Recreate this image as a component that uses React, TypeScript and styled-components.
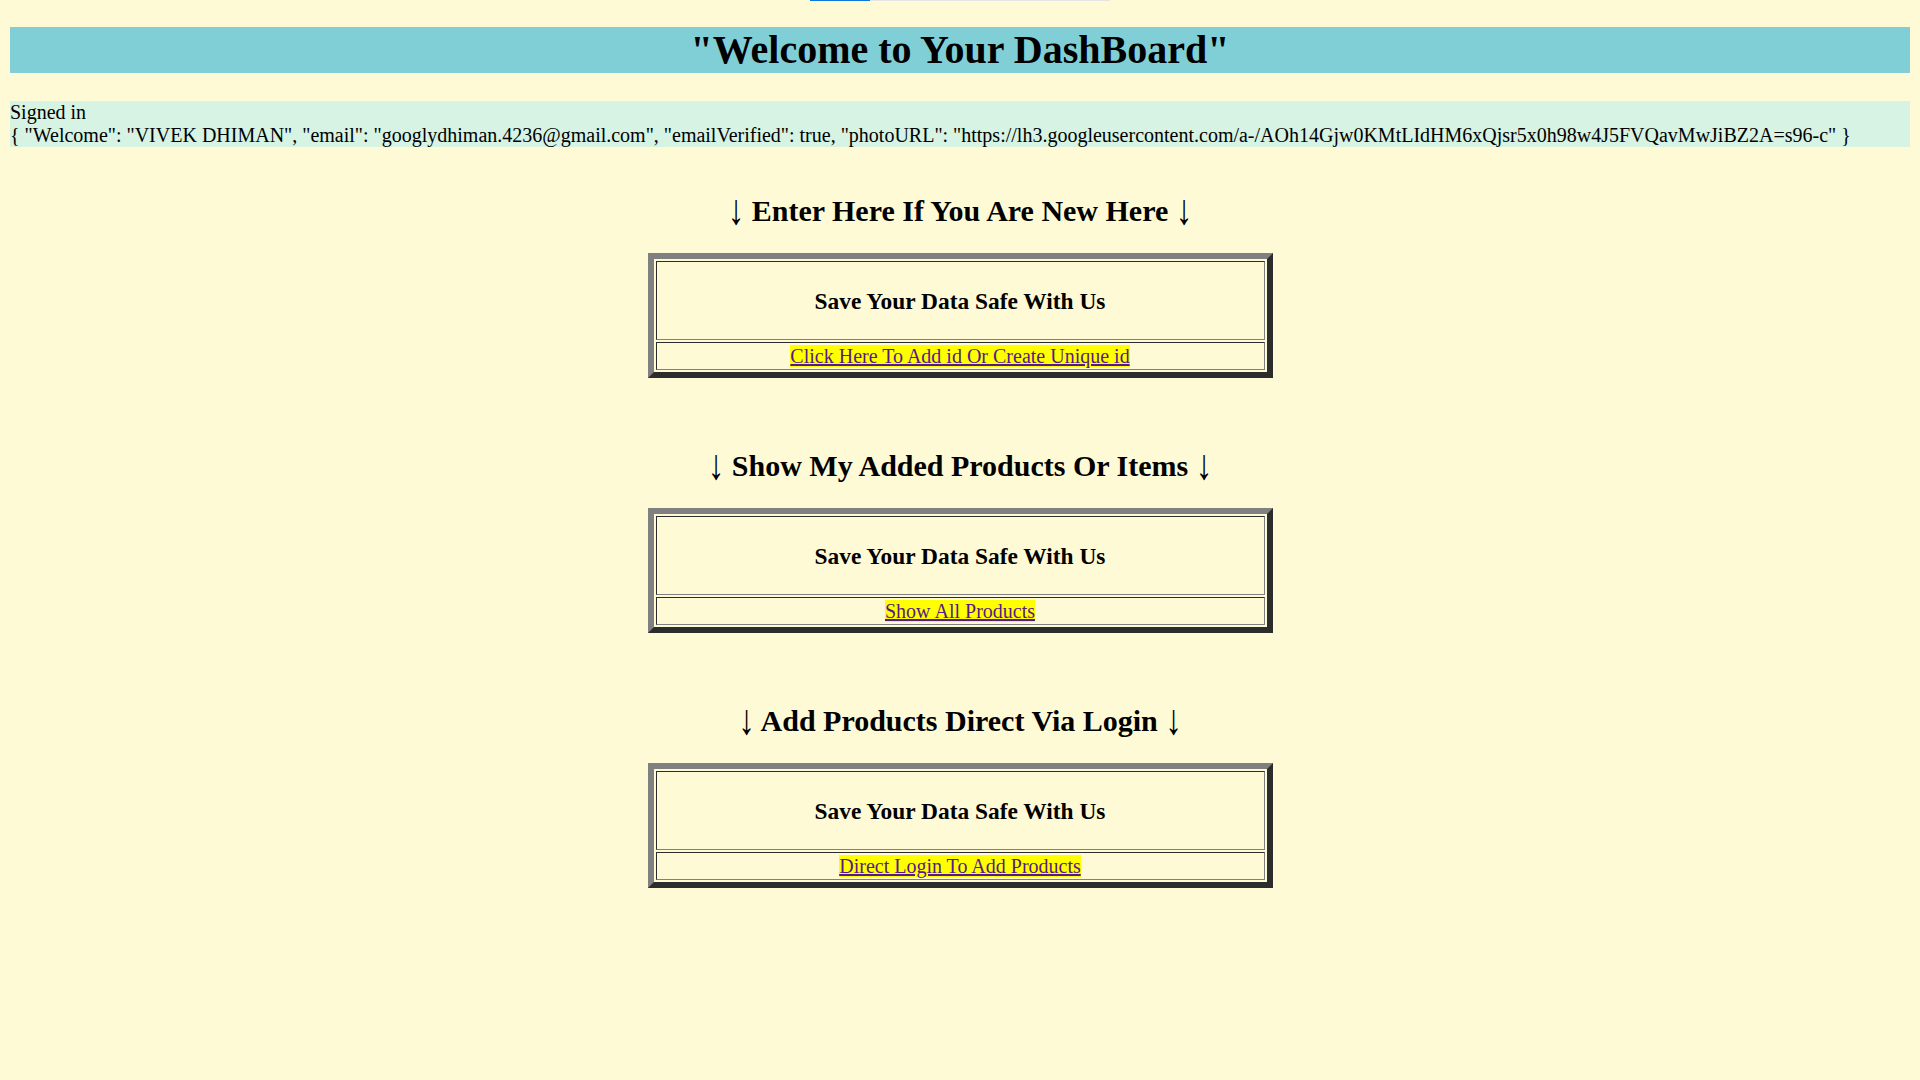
import styled, { createGlobalStyle } from "styled-components";

const GlobalStyle = createGlobalStyle`
    html, body {
        margin: 0;
        padding: 0;
        background: #fffad6;
    }
    body {
        font-family: "Liberation Serif", "Times New Roman", serif;
        font-size: 20px;
        color: #000;
    }
`;

const Page = styled.div`
    position: relative;
    min-height: 1080px;
    padding: 0 10px;
    box-sizing: border-box;
`;

// the progress bar peeking in at the very top of the page
const TopProgress = styled.div`
    position: absolute;
    top: 0;
    left: 50%;
    transform: translateX(-50%);
    width: 300px;
    height: 1px;
    background: #e5e5e5;
`;

const TopProgressFill = styled.div<{ $value: number }>`
    width: ${(p) => p.$value}%;
    height: 100%;
    background: #0a78d6;
`;

const Title = styled.h1`
    margin: 0;
    padding-top: 27px;
    font-size: 40px;
    line-height: 46px;
    font-weight: bold;
    text-align: center;
    & > span {
        display: block;
        background: #80cfd7;
    }
`;

const Info = styled.div`
    margin-top: 28px;
    background: #d6f3e3;
    font-size: 20px;
    line-height: 23px;
    white-space: nowrap;
`;

const Sections = styled.div`
    display: flex;
    flex-direction: column;
    align-items: center;
    gap: 71px;
    padding-top: 47px;
`;

const Section = styled.section`
    display: flex;
    flex-direction: column;
    align-items: center;
`;

const Heading = styled.h2`
    margin: 0 0 25px;
    font-size: 30px;
    line-height: 34px;
    font-weight: bold;
    text-align: center;
`;

const Arrow = styled.span`
    display: inline-block;
    font-weight: normal;
    font-size: 1.1em;
    line-height: 31px;
    transform: scaleY(1.3);
    transform-origin: 50% 50%;
`;

const Card = styled.table`
    width: 625px;
    border-collapse: separate;
    border-spacing: 2px;
    border-style: solid;
    border-width: 6px;
    border-color: #808080 #2c2c2c #2c2c2c #808080;
`;

const Cell = styled.td`
    padding: 1px;
    text-align: center;
    border-style: solid;
    border-width: 1px;
    border-color: #2c2c2c #808080 #808080 #2c2c2c;
`;

const CardTitle = styled.h3`
    margin: 25px 0 23px;
    font-size: 23.4px;
    line-height: 27px;
    font-weight: bold;
`;

const CardLink = styled.a`
    display: inline-block;
    font-size: 20px;
    line-height: 24px;
    color: #551a8b;
    text-decoration: underline;
    & > span {
        background: #ffff00;
    }
`;

const user = {
    Welcome: "VIVEK DHIMAN",
    email: "googlydhiman.4236@gmail.com",
    emailVerified: true,
    photoURL: "https://lh3.googleusercontent.com/a-/AOh14Gjw0KMtLIdHM6xQjsr5x0h98w4J5FVQavMwJiBZ2A=s96-c",
};

const sections = [
    { heading: "Enter Here If You Are New Here", link: "Click Here To Add id Or Create Unique id" },
    { heading: "Show My Added Products Or Items", link: "Show All Products" },
    { heading: "Add Products Direct Via Login", link: "Direct Login To Add Products" },
];

const userText = "{ " + Object.entries(user)
    .map(([key, value]) => `"${key}": ${typeof value === "string" ? `"${value}"` : value}`)
    .join(", ") + " }";

export default function App() {
    return <>
        <GlobalStyle />
        <Page>
            <TopProgress>
                <TopProgressFill $value={20} />
            </TopProgress>
            <Title><span>"Welcome to Your DashBoard"</span></Title>
            <Info>
                Signed in
                <br />
                {userText}
            </Info>
            <Sections>
                {sections.map((s) => (
                    <Section key={s.heading}>
                        <Heading><Arrow>↓</Arrow> {s.heading} <Arrow>↓</Arrow></Heading>
                        <Card>
                            <tbody>
                                <tr>
                                    <Cell><CardTitle>Save Your Data Safe With Us</CardTitle></Cell>
                                </tr>
                                <tr>
                                    <Cell>
                                        <CardLink href="#"><span>{s.link}</span></CardLink>
                                    </Cell>
                                </tr>
                            </tbody>
                        </Card>
                    </Section>
                ))}
            </Sections>
        </Page>
    </>
}
